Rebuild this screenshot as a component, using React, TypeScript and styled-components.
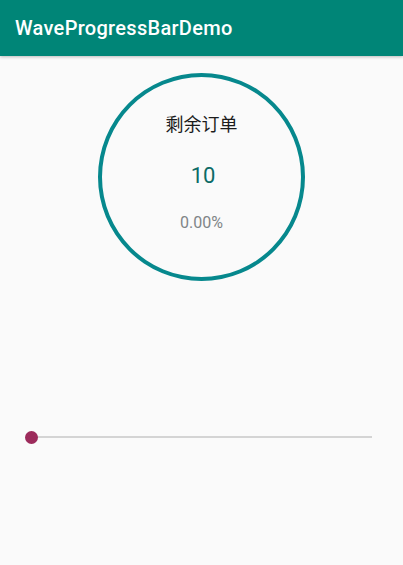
import React from "react";
import styled, { createGlobalStyle } from "styled-components";

const Global = createGlobalStyle`
  html, body { margin: 0; padding: 0; background: #fafafa; }
  body { font-family: Roboto, "Noto Sans CJK SC", sans-serif; }
  * { box-sizing: border-box; }
`;

const Page = styled.div`
  width: 403px;
  height: 565px;
  background: #fafafa;
  display: flex;
  flex-direction: column;
`;

const AppBar = styled.header`
  height: 56px;
  background: #008577;
  display: flex;
  align-items: center;
  padding-left: 15px;
  box-shadow: 0 1px 3px rgba(0, 0, 0, 0.25);
  flex-shrink: 0;
`;

const Title = styled.h1`
  margin: 0;
  color: #ffffff;
  font-family: Roboto, sans-serif;
  font-weight: 500;
  font-size: 20px;
  letter-spacing: 0.3px;
`;

const Content = styled.main`
  display: flex;
  flex-direction: column;
  align-items: center;
  padding-top: 17px;
`;

const Ring = styled.div`
  width: 207px;
  height: 208px;
  border: 4px solid #06888d;
  border-radius: 50%;
  display: flex;
  flex-direction: column;
  align-items: center;
  padding-top: 36px;
`;

const Label = styled.div`
  font-family: Roboto, "Noto Sans CJK SC", sans-serif;
  font-size: 18px;
  line-height: 24px;
  color: #1c1c1c;
`;

const Count = styled.div`
  margin-top: 24px;
  padding-left: 3px;
  font-family: Roboto, sans-serif;
  font-size: 22px;
  line-height: 30px;
  color: #0b6b66;
`;

const Percent = styled.div`
  margin-top: 21px;
  font-family: Roboto, sans-serif;
  font-size: 16px;
  line-height: 22px;
  color: #7f8587;
`;

const SliderRow = styled.div`
  align-self: stretch;
  margin: 144px 31px 0 31px;
  height: 24px;
  display: flex;
  align-items: center;
  position: relative;
`;

const Track = styled.div`
  flex: 1;
  height: 2px;
  background: #d4d4d4;
`;

const Thumb = styled.div`
  position: absolute;
  left: -6px;
  top: 50%;
  width: 13px;
  height: 13px;
  margin-top: -6px;
  border-radius: 50%;
  background: #9c2b5b;
`;

export default function App() {
  return (
    <>
      <Global />
      <Page>
        <AppBar>
          <Title>WaveProgressBarDemo</Title>
        </AppBar>
        <Content>
          <Ring>
            <Label>剩余订单</Label>
            <Count>10</Count>
            <Percent>0.00%</Percent>
          </Ring>
          <SliderRow>
            <Track />
            <Thumb />
          </SliderRow>
        </Content>
      </Page>
    </>
  );
}
